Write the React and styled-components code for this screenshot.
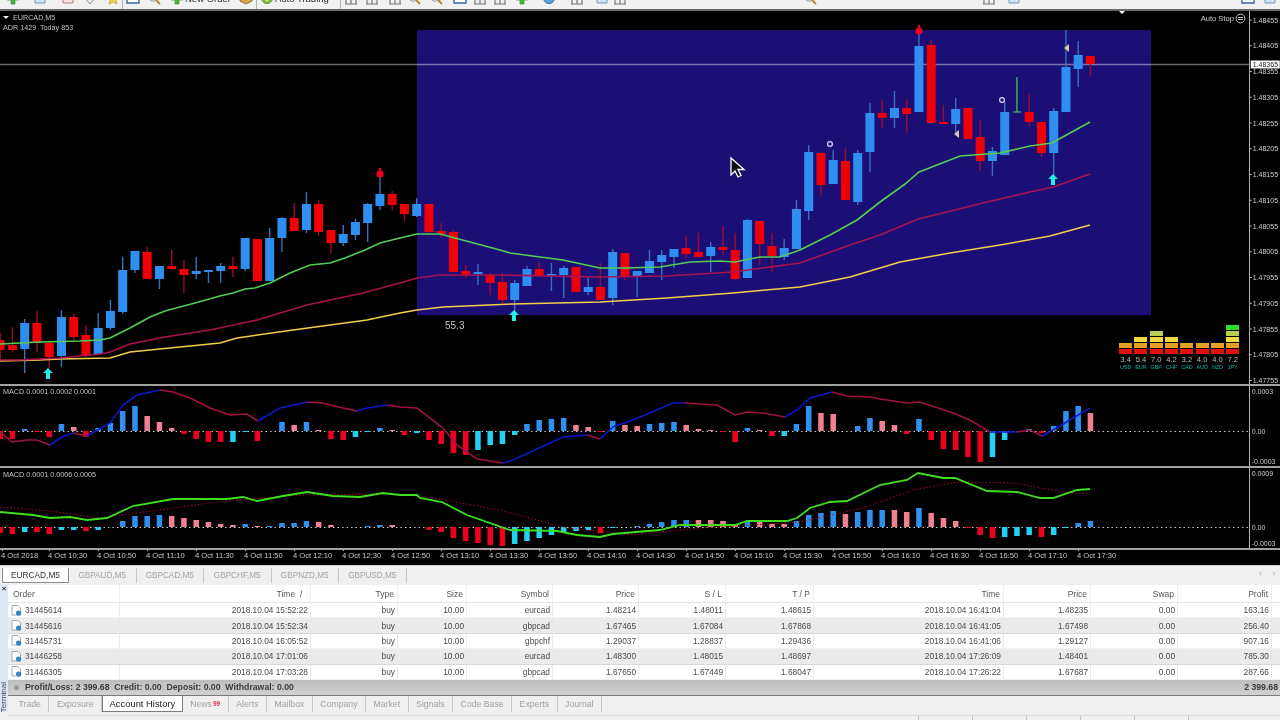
import React from 'react';
import styled, { createGlobalStyle } from 'styled-components';

const GlobalStyle = createGlobalStyle`
	html, body {
		margin: 0;
		padding: 0;
		background: #f0f0f0;
		overflow: hidden;
	}
	body, text {
		font-family: "Liberation Sans", Arial, sans-serif;
	}
`;

const COLUMNS = '112px 191px 87px 69px 86px 86px 87px 88px 190px 87px 87px 94px';

const Page = styled.div`
	width: 1280px;
	height: 720px;
	display: flex;
	flex-direction: column;
	overflow: hidden;
	filter: blur(0.4px);
	background: #f0f0f0;
`;

/* ---- toolbar, only its lower edge is on screen ---- */
const Toolbar = styled.div`
	height: 9px;
	box-sizing: border-box;
	padding: 0 0 4px 0;
	display: flex;
	align-items: flex-end;
	background: #f1f1f1;
	flex-shrink: 0;
`;

const ToolItem = styled.div`
	position: relative;
	display: flex;
	align-items: flex-end;
	gap: 1px;
	flex-shrink: 0;
	margin-left: ${p => p.$gap}px;
	${p => p.$sep && `
		&::before {
			content: '';
			position: absolute;
			left: -4px;
			bottom: -4px;
			width: 1px;
			height: 12px;
			background: #b5b5b5;
		}
	`}
`;

const ToolLabel = styled.span`
	font-size: 9.5px;
	line-height: 9px;
	color: #333;
	white-space: nowrap;
	margin-bottom: 2px;
`;

/* ---- chart window ---- */
const ChartWindow = styled.div`
	height: 556px;
	flex-shrink: 0;
	display: flex;
	flex-direction: column;
	background: #000;
	border-top: 2px solid #6a6a6a;
	box-sizing: border-box;
`;

const Pane = styled.div`
	display: flex;
	height: ${p => p.$height}px;
	flex-shrink: 0;
	box-sizing: border-box;
	border-bottom: 2px solid #a2a2a2;
`;

const Plot = styled.div`
	position: relative;
	width: 1249px;
	flex-shrink: 0;
	overflow: hidden;
`;

const PlotSvg = styled.svg`
	display: block;
`;

const PriceAxis = styled.svg`
	display: block;
	width: 31px;
	flex-shrink: 0;
	border-left: 1.5px solid #b0b0b0;
	box-sizing: border-box;
`;

const AxisText = styled.text`
	font-size: 7px;
	fill: ${p => p.$fill || '#cfcfcf'};
`;

const Legend = styled.div`
	position: absolute;
	left: ${p => p.$left || 3}px;
	top: ${p => p.$top}px;
	font-size: ${p => p.$size || 7.2}px;
	line-height: 10px;
	color: #c4c4c4;
	white-space: pre;
`;

const Caret = styled.span`
	display: inline-block;
	width: 0;
	height: 0;
	margin: 0 4px 1px 0;
	border-left: 3px solid transparent;
	border-right: 3px solid transparent;
	border-top: 3px solid #eee;
`;

const AutoStop = styled.div`
	position: absolute;
	right: 3px;
	top: 2px;
	display: flex;
	align-items: center;
	gap: 1px;
	font-size: 7.6px;
	color: #c8c8c8;
`;

const Meter = styled.div`
	position: absolute;
	left: 1118px;
	top: 313px;
	display: flex;
`;

const MeterCol = styled.div`
	width: 15.3px;
	display: flex;
	flex-direction: column;
	align-items: center;
`;

const MeterStack = styled.div`
	height: 30px;
	display: flex;
	flex-direction: column-reverse;
	gap: 1px;
`;

const MeterSeg = styled.div`
	width: 13px;
	height: 5px;
	background: ${p => p.$color};
`;

const MeterValue = styled.div`
	font-size: 7.6px;
	line-height: 9px;
	margin-top: 1px;
	color: #bcbcbc;
`;

const MeterName = styled.div`
	font-size: 5.4px;
	line-height: 7px;
	color: #12b5a5;
`;

const TimeAxis = styled.div`
	height: 15px;
	flex-shrink: 0;
	display: flex;
	padding-left: 1px;
	background: #000;
`;

const TimeLabel = styled.div`
	position: relative;
	width: ${p => (p.$first ? 47 : 49)}px;
	flex-shrink: 0;
	padding-top: 1px;
	font-size: 7.6px;
	line-height: 9px;
	color: #c9c9c9;
	white-space: nowrap;
	&::before {
		content: '';
		position: absolute;
		left: 1px;
		top: -1px;
		width: 1px;
		height: 2px;
		background: #aaa;
	}
`;

/* ---- symbol tabs ---- */
const SymbolBar = styled.div`
	height: 20px;
	flex-shrink: 0;
	display: flex;
	align-items: flex-start;
	padding: 2px 0 0 2px;
	box-sizing: border-box;
	background: #f0f0f0;
	border-top: 1px solid #cfcfcf;
`;

const SymbolTab = styled.div`
	box-sizing: border-box;
	height: 15px;
	width: ${p => (p.$active ? '67px' : '67.5px')};
	display: flex;
	align-items: center;
	justify-content: center;
	font-size: ${p => (p.$active ? 8.3 : 8.2)}px;
	color: ${p => (p.$active ? '#333' : '#a3a3a3')};
	background: ${p => (p.$active ? '#fff' : 'transparent')};
	border: ${p => (p.$active ? '1px solid #8d8d8d' : '0')};
	border-top: 0;
	border-right: ${p => (p.$active ? '1px solid #8d8d8d' : '1px solid #c8c8c8')};
`;

const Scroller = styled.div`
	margin-left: auto;
	padding: 2px 5px 0 0;
	display: flex;
	gap: 11px;
	font-size: 7px;
	color: #999;
`;

/* ---- terminal ---- */
const Terminal = styled.div`
	flex: 1;
	display: flex;
	min-height: 0;
`;

const Sliver = styled.div`
	width: 8px;
	flex-shrink: 0;
	height: 127px;
	display: flex;
	flex-direction: column;
	justify-content: space-between;
	align-items: center;
	background: #dbe7f2;
	overflow: hidden;
`;

const CloseMark = styled.div`
	font-size: 8px;
	line-height: 8px;
	font-weight: bold;
	color: #333;
`;

const SliverTitle = styled.div`
	writing-mode: vertical-rl;
	transform: rotate(180deg);
	font-size: 8px;
	line-height: 8px;
	color: #445;
`;

const TerminalBody = styled.div`
	flex: 1;
	min-width: 0;
	display: flex;
	flex-direction: column;
`;

const TableHead = styled.div`
	display: grid;
	grid-template-columns: ${COLUMNS};
	height: 18px;
	background: #fff;
	border-bottom: 1px solid #e4e4e4;
	box-sizing: border-box;
`;

const HeadCell = styled.div`
	display: flex;
	align-items: center;
	justify-content: ${p => (p.$left ? 'flex-start' : 'flex-end')};
	padding: ${p => (p.$left ? '0 0 0 5px' : '0 3px 0 0')};
	font-size: 8.5px;
	color: #555;
	border-right: 1px solid #efefef;
	white-space: pre;
`;

const Row = styled.div`
	display: grid;
	grid-template-columns: ${COLUMNS};
	height: 15.4px;
	background: ${p => (p.$even ? '#ebebeb' : '#fff')};
	box-sizing: border-box;
	border-bottom: 1px solid ${p => (p.$even ? '#d8d8d8' : '#f2f2f2')};
`;

const Cell = styled.div`
	display: flex;
	align-items: center;
	justify-content: ${p => (p.$left ? 'flex-start' : 'flex-end')};
	gap: 3px;
	padding: ${p => (p.$left ? '0 0 0 3px' : '0 2px 0 0')};
	font-size: 8.3px;
	color: #4a4a4a;
	border-right: 1px solid #e9e9e9;
	white-space: nowrap;
`;

const StatusBar = styled.div`
	height: 16px;
	flex-shrink: 0;
	box-sizing: border-box;
	display: flex;
	align-items: center;
	padding: 0 2px 0 5px;
	gap: 6px;
	font-size: 8.7px;
	font-weight: bold;
	color: #3a3a3a;
	white-space: pre;
	background: linear-gradient(#bcbcbc, #d2d2d2);
	border-bottom: 1px solid #777;
`;

const StatusDot = styled.span`
	width: 5px;
	height: 5px;
	border-radius: 50%;
	background: #9d9d9d;
	margin-left: 1px;
`;

const StatusTotal = styled.span`
	margin-left: auto;
`;

const TermTabs = styled.div`
	height: 16px;
	flex-shrink: 0;
	display: flex;
	padding-left: 3px;
	background: #f0f0f0;
`;

const TermTab = styled.div`
	display: flex;
	align-items: center;
	box-sizing: border-box;
	padding: 0 ${p => (p.$active ? 6.5 : 7.5)}px;
	font-size: ${p => (p.$active ? 9.4 : 8.7)}px;
	color: ${p => (p.$active ? '#222' : '#a0a0a0')};
	white-space: nowrap;
	background: ${p => (p.$active ? '#fff' : 'transparent')};
	border-right: 1px solid ${p => (p.$active ? '#7d7d7d' : '#c4c4c4')};
	border-left: ${p => (p.$active ? '1px solid #7d7d7d' : '0')};
	border-bottom: ${p => (p.$active ? '1px solid #7d7d7d' : '0')};
`;

const Badge = styled.sub`
	font-size: 6.5px;
	font-weight: bold;
	line-height: 0;
	color: #d83050;
	margin-left: 1px;
`;

const Footer = styled.div`
	flex: 1;
	display: flex;
	padding-left: 910px;
	margin-top: 3px;
	background: #f0f0f0;
	border-top: 1px solid #dcdcdc;
`;

const FooterCell = styled.div`
	width: 53px;
	flex-shrink: 0;
	border-left: 1px solid #c4c4c4;
`;

/* ---- chart data, page pixel coordinates ---- */
const X = i => 0.2 + 12.25 * i;
const pts = arr => arr.map(p => p.join(',')).join(' ');

// [body top, body bottom, high, low, colour]
const CANDLES = [
	[340, 350, 333, 360, 'r'], [345, 350, 327, 352, 'r'], [323, 349, 319, 373, 'b'], [323, 343, 311, 352, 'r'],
	[343, 357, 342, 368, 'r'], [317, 356, 310, 367, 'b'], [317, 337, 314, 340, 'r'], [335, 356, 325, 357, 'r'],
	[328, 354, 313, 355, 'b'], [311, 328, 300, 330, 'b'], [270, 312, 257, 314, 'b'], [251, 270, 251, 273, 'b'],
	[252, 279, 247, 279, 'r'], [266, 279, 266, 289, 'b'], [266, 269, 250, 270, 'r'], [269, 275, 260, 293, 'r'],
	[271, 274, 257, 279, 'b'], [270, 271, 270, 283, 'b'], [266, 271, 263, 283, 'b'], [266, 269, 257, 277, 'r'],
	[238, 269, 238, 271, 'b'], [239, 281, 239, 281, 'r'], [238, 281, 228, 281, 'b'], [218, 238, 217, 252, 'b'],
	[218, 231, 203, 231, 'r'], [204, 230, 192, 233, 'b'], [204, 232, 200, 236, 'r'], [230, 243, 230, 253, 'r'],
	[234, 243, 225, 246, 'b'], [222, 235, 219, 240, 'b'], [204, 223, 203, 242, 'b'], [194, 206, 177, 210, 'b'],
	[194, 205, 191, 210, 'r'], [204, 214, 204, 221, 'r'], [204, 216, 198, 217, 'b'], [204, 232, 204, 233, 'r'],
	[231, 234, 223, 238, 'r'], [232, 272, 230, 272, 'r'], [271, 275, 265, 278, 'r'], [272, 273, 264, 285, 'b'],
	[275, 283, 273, 295, 'r'], [282, 300, 273, 303, 'r'], [283, 300, 280, 313, 'b'], [269, 286, 266, 286, 'b'],
	[269, 275, 262, 275, 'r'], [274, 275, 263, 291, 'b'], [268, 275, 266, 298, 'b'], [267, 292, 267, 292, 'r'],
	[287, 292, 277, 295, 'b'], [287, 300, 263, 300, 'r'], [252, 298, 249, 305, 'b'], [253, 277, 253, 280, 'r'],
	[271, 277, 271, 297, 'b'], [261, 273, 250, 273, 'b'], [255, 262, 250, 280, 'b'], [249, 257, 249, 268, 'b'],
	[248, 254, 236, 258, 'r'], [252, 257, 233, 257, 'r'], [247, 256, 242, 272, 'b'], [247, 250, 226, 255, 'r'],
	[250, 279, 233, 280, 'r'], [220, 278, 219, 278, 'b'], [221, 244, 221, 265, 'r'], [246, 256, 233, 272, 'r'],
	[248, 257, 239, 260, 'b'], [209, 249, 200, 249, 'b'], [152, 211, 145, 220, 'b'], [153, 185, 153, 195, 'r'],
	[160, 184, 150, 184, 'b'], [161, 200, 148, 200, 'r'], [153, 202, 150, 205, 'b'], [113, 152, 103, 172, 'b'],
	[113, 118, 100, 128, 'r'], [108, 118, 91, 128, 'b'], [108, 114, 100, 133, 'r'], [46, 112, 30, 112, 'b'],
	[45, 123, 40, 123, 'r'], [122, 124, 105, 124, 'r'], [109, 124, 98, 133, 'b'], [108, 139, 108, 139, 'r'],
	[137, 161, 120, 171, 'r'], [151, 161, 147, 176, 'b'], [112, 155, 102, 155, 'b'], [111, 112, 77, 112, 'g'],
	[112, 122, 94, 126, 'r'], [122, 153, 122, 157, 'r'], [111, 153, 108, 175, 'b'], [67, 112, 30, 112, 'b'],
	[55, 69, 41, 87, 'b'], [56, 64, 56, 76, 'r']
];

const BODY = { b: '#2e8ff0', r: '#f00006', g: '#48b060' };
const WICK = { b: '#3a6fc0', r: '#9c0c28', g: '#48b060' };

const MA_GREEN = [[0, 344], [40, 342], [80, 341], [100, 340], [110, 338], [130, 328], [150, 317], [165, 311], [195, 303], [220, 296], [233, 293], [245, 289], [255, 288], [270, 283], [290, 273], [310, 265], [330, 263], [345, 258], [365, 250], [380, 243], [400, 238], [417, 234], [440, 234], [470, 242], [500, 250], [510, 253], [540, 257], [563, 260], [600, 268], [625, 268], [660, 267], [690, 262], [720, 261], [735, 262], [760, 257], [780, 257], [800, 250], [830, 235], [857, 220], [880, 202], [905, 184], [919, 172], [960, 156], [1000, 153], [1030, 146], [1052, 143], [1070, 133], [1090, 122]];
const MA_RED = [[0, 360], [20, 360], [60, 358], [100, 354], [110, 352], [130, 344], [165, 337], [210, 330], [257, 320], [307, 305], [363, 293], [400, 283], [417, 278], [440, 275], [500, 275], [600, 277], [667, 276], [733, 272], [800, 263], [850, 245], [880, 235], [918, 219], [947, 212], [987, 202], [1030, 192], [1053, 187], [1090, 174]];
const MA_YELLOW = [[0, 361], [40, 360], [60, 359], [110, 358], [130, 352], [220, 343], [237, 338], [293, 330], [367, 320], [400, 313], [417, 310], [443, 307], [513, 304], [600, 302], [667, 298], [733, 293], [800, 287], [850, 277], [900, 262], [950, 253], [1000, 245], [1050, 236], [1090, 225]];

const HIST_COLOR = { r: '#f00020', p: '#f08092', b: '#2f90f0', c: '#22d0f2' };

const HIST_A = [
	['r', -8], ['r', -8], ['b', 2], ['r', -1], ['r', -6], ['b', 7], ['p', 4], ['r', -6], ['b', 3], ['b', 8], ['b', 20], ['b', 25],
	['p', 15], ['p', 9], ['p', 3], ['r', -3], ['r', -8], ['r', -11], ['r', -11], ['c', -11], ['c', -1], ['r', -10], ['r', 0], ['b', 9],
	['p', 6], ['b', 9], ['p', 1], ['r', -8], ['r', -9], ['c', -6], ['c', -1], ['b', 3], ['p', 1], ['r', -4], ['c', -2], ['r', -9],
	['r', -13], ['r', -22], ['r', -24], ['c', -19], ['c', -14], ['c', -13], ['c', -4], ['b', 7], ['b', 11], ['b', 12], ['b', 13], ['p', 6],
	['p', 4], ['r', -1], ['b', 10], ['p', 6], ['p', 5], ['b', 7], ['b', 8], ['b', 9], ['p', 6], ['p', 2], ['p', 1], ['r', -1],
	['r', -11], ['b', 3], ['p', 1], ['r', -5], ['c', -5], ['b', 7], ['b', 25], ['p', 18], ['p', 17], ['r', 0], ['b', 5], ['b', 13],
	['p', 10], ['p', 6], ['r', -3], ['b', 12], ['r', -9], ['r', -18], ['r', -19], ['r', -26], ['r', -31], ['c', -26], ['c', -9], ['c', 0],
	['b', 2], ['r', -2], ['b', 5], ['b', 20], ['b', 25], ['p', 18]
];

const HIST_B = [
	['r', -6], ['r', -7], ['c', -5], ['r', -5], ['r', -7], ['c', -3], ['c', -3], ['r', -4], ['c', -3], ['r', 0], ['b', 6], ['b', 11],
	['b', 11], ['b', 12], ['p', 11], ['p', 9], ['p', 7], ['p', 5], ['p', 3], ['p', 2], ['b', 3], ['p', 1], ['b', 1], ['b', 4],
	['b', 4], ['b', 6], ['p', 5], ['p', 2], ['r', 0], ['r', 0], ['b', 1], ['b', 2], ['p', 2], ['r', 0], ['r', 0], ['r', -3],
	['r', -5], ['r', -11], ['r', -14], ['r', -16], ['r', -18], ['r', -19], ['c', -17], ['c', -14], ['c', -11], ['c', -8], ['c', -5], ['c', -4],
	['c', -3], ['r', -6], ['c', -1], ['r', 0], ['b', 1], ['b', 3], ['b', 5], ['b', 7], ['b', 7], ['p', 7], ['p', 7], ['p', 6],
	['p', 2], ['b', 5], ['p', 5], ['p', 3], ['p', 3], ['b', 6], ['b', 12], ['b', 14], ['b', 16], ['p', 13], ['b', 15], ['b', 17],
	['b', 17], ['p', 17], ['p', 15], ['b', 19], ['p', 14], ['p', 9], ['p', 6], ['r', -1], ['r', -8], ['r', -11], ['c', -10], ['c', -9],
	['c', -8], ['r', -10], ['c', -8], ['c', -1], ['b', 4], ['b', 6]
];

// macd line of the first pane, crimson and blue stretches in turn
const MACD_LINES = [
	['#a01048', [[0, 432], [12, 442], [27, 440], [37, 440], [50, 445]]],
	['#0d18c8', [[50, 445], [62, 437], [73, 433]]],
	['#a01048', [[73, 433], [87, 436]]],
	['#0d18c8', [[87, 436], [110, 423], [123, 405], [137, 395], [160, 390]]],
	['#a01048', [[160, 390], [173, 392], [190, 398], [210, 408], [230, 415], [247, 414], [258, 421]]],
	['#0d18c8', [[258, 421], [280, 408], [307, 402]]],
	['#a01048', [[307, 402], [322, 403], [343, 408], [357, 411]]],
	['#0d18c8', [[357, 411], [367, 408], [387, 405]]],
	['#a01048', [[387, 405], [400, 407], [417, 408], [443, 428], [457, 445], [477, 459], [503, 463]]],
	['#0d18c8', [[503, 463], [513, 460], [563, 437], [587, 435]]],
	['#a01048', [[587, 435], [600, 439]]],
	['#0d18c8', [[600, 439], [613, 427], [633, 420], [673, 403], [685, 403]]],
	['#a01048', [[685, 403], [717, 405], [735, 415], [747, 412], [763, 413], [785, 417]]],
	['#0d18c8', [[785, 417], [797, 410], [810, 398], [832, 392]]],
	['#a01048', [[832, 392], [847, 396], [870, 397], [880, 399], [907, 403], [920, 402], [953, 413], [970, 420], [990, 432]]],
	['#0d18c8', [[990, 432], [1017, 432]]],
	['#a01048', [[1017, 432], [1030, 430], [1042, 436]]],
	['#0d18c8', [[1042, 436], [1053, 430], [1090, 408]]]
];

const MACD_GREEN = [[0, 512], [33, 515], [50, 518], [70, 517], [87, 520], [107, 518], [133, 506], [173, 499], [227, 499], [243, 497], [257, 501], [283, 496], [307, 492], [333, 496], [360, 497], [383, 493], [400, 495], [417, 495], [420, 498], [442, 502], [467, 515], [510, 530], [557, 531], [577, 535], [600, 537], [613, 534], [660, 530], [680, 525], [735, 525], [747, 521], [787, 521], [797, 518], [810, 508], [830, 502], [847, 501], [880, 485], [907, 480], [918, 473], [943, 478], [955, 478], [987, 491], [1017, 492], [1040, 498], [1053, 498], [1077, 490], [1090, 489]];
const MACD_SIGNAL = [[0, 507], [50, 511], [100, 518], [217, 502], [300, 495], [400, 494], [433, 498], [500, 510], [567, 528], [633, 535], [700, 528], [800, 522], [863, 508], [913, 490], [957, 482], [1013, 483], [1063, 492], [1090, 494]];

const PRICES = ['1.48455', '1.48405', '1.48355', '1.48305', '1.48255', '1.48205', '1.48155', '1.48105', '1.48055', '1.48005', '1.47955', '1.47905', '1.47855', '1.47805', '1.47755'];

const TIMES = ['4 Oct 2018', '4 Oct 10:30', '4 Oct 10:50', '4 Oct 11:10', '4 Oct 11:30', '4 Oct 11:50', '4 Oct 12:10', '4 Oct 12:30', '4 Oct 12:50', '4 Oct 13:10', '4 Oct 13:30', '4 Oct 13:50', '4 Oct 14:10', '4 Oct 14:30', '4 Oct 14:50', '4 Oct 15:10', '4 Oct 15:30', '4 Oct 15:50', '4 Oct 16:10', '4 Oct 16:30', '4 Oct 16:50', '4 Oct 17:10', '4 Oct 17:30'];

const STRENGTH = [
	{ name: 'USD', value: '3.4', level: 2 },
	{ name: 'EUR', value: '5.4', level: 3 },
	{ name: 'GBP', value: '7.0', level: 4 },
	{ name: 'CHF', value: '4.2', level: 3 },
	{ name: 'CAD', value: '3.2', level: 2 },
	{ name: 'AUD', value: '4.0', level: 2 },
	{ name: 'NZD', value: '4.0', level: 2 },
	{ name: 'JPY', value: '7.2', level: 5 }
];
const SEG_COLORS = ['#e01010', '#e8a024', '#f0d840', '#b8d050', '#2ee02e'];

const SYMBOLS = ['EURCAD,M5', 'GBPAUD,M5', 'GBPCAD,M5', 'GBPCHF,M5', 'GBPNZD,M5', 'GBPUSD,M5'];

const HEAD = ['Order', 'Time  /  ', 'Type', 'Size', 'Symbol', 'Price', 'S / L', 'T / P', 'Time', 'Price', 'Swap', 'Profit'];

const ROWS = [
	['31445614', '2018.10.04 15:52:22', 'buy', '10.00', 'eurcad', '1.48214', '1.48011', '1.48615', '2018.10.04 16:41:04', '1.48235', '0.00', '163.16'],
	['31445616', '2018.10.04 15:52:34', 'buy', '10.00', 'gbpcad', '1.67465', '1.67084', '1.67868', '2018.10.04 16:41:05', '1.67498', '0.00', '256.40'],
	['31445731', '2018.10.04 16:05:52', 'buy', '10.00', 'gbpchf', '1.29037', '1.28837', '1.29436', '2018.10.04 16:41:06', '1.29127', '0.00', '907.16'],
	['31446258', '2018.10.04 17:01:06', 'buy', '10.00', 'eurcad', '1.48300', '1.48015', '1.48697', '2018.10.04 17:26:09', '1.48401', '0.00', '785.30'],
	['31446305', '2018.10.04 17:03:28', 'buy', '10.00', 'gbpcad', '1.67650', '1.67449', '1.68047', '2018.10.04 17:26:22', '1.67687', '0.00', '287.66']
];

const TERM_TABS = ['Trade', 'Exposure', 'Account History', 'News', 'Alerts', 'Mailbox', 'Company', 'Market', 'Signals', 'Code Base', 'Experts', 'Journal'];

const TOOLS = [
	{ k: 'plus', gap: 6 },
	{ k: 'doc', gap: 13 },
	{ k: 'red', gap: 14 },
	{ k: 'gem', gap: 8 },
	{ k: 'star', gap: 9 },
	{ k: 'frame', gap: 6, sep: true },
	{ k: 'lens', gap: 7 },
	{ k: 'plus', gap: 9, label: 'New Order' },
	{ k: 'box', gap: 8 },
	{ k: 'auto', gap: 7, sep: true, label: 'Auto Trading' },
	{ k: 'bars', gap: 15, sep: true },
	{ k: 'bars', gap: 7 },
	{ k: 'bars', gap: 9 },
	{ k: 'lens', gap: 5 },
	{ k: 'lens', gap: 8 },
	{ k: 'frame', gap: 10 },
	{ k: 'bars', gap: 6 },
	{ k: 'bars', gap: 6 },
	{ k: 'plus', gap: 8 },
	{ k: 'disc', gap: 13 },
	{ k: 'bars', gap: 14 },
	{ k: 'doc', gap: 11 },
	{ k: 'bars', gap: 4 },
	{ k: 'lens', gap: 176 },
	{ k: 'bars', gap: 165 },
	{ k: 'doc', gap: 11 },
	{ k: 'frame', gap: 220 },
	{ k: 'doc', gap: 8 }
];

const ToolGlyph = ({ k }) => {
	const shapes = {
		plus: <path d="M5 1h4v4h4v4H9v4H5V9H1V5h4z" fill="#3fb93a" stroke="#2b8a2a" strokeWidth=".6" />,
		doc: <path d="M2 1h10v11H2z" fill="#cfe0f2" stroke="#7f97b4" />,
		red: <path d="M2 2h10v10H2z" fill="#f5e6e6" stroke="#b87878" />,
		gem: <path d="M1 6l6 7 6-7-3-4H4z" fill="#e8e8e0" stroke="#9a9a90" />,
		star: <path d="M7 1l2 4 4 1-3 3 1 4-4-2-4 2 1-4-3-3 4-1z" fill="#f2d34a" stroke="#b99a24" strokeWidth=".7" />,
		frame: <path d="M1 2h12v10H1z" fill="#fff" stroke="#3a62a8" strokeWidth="1.4" />,
		lens: <g><circle cx="6" cy="6" r="4.2" fill="#e7f0f8" stroke="#8a9aa8" /><path d="M9 9l4 4" stroke="#b58a34" strokeWidth="2" /></g>,
		box: <path d="M1 5l6-3 6 3v5l-6 3-6-3z" fill="#d9a54c" stroke="#96702a" />,
		auto: <g><circle cx="7" cy="7" r="5.5" fill="#8cc63f" stroke="#5d8f25" /><path d="M7 4v6" stroke="#fff" strokeWidth="1.6" /></g>,
		bars: <path d="M2 13V6M7 13V3M12 13V8M1 13h12" stroke="#777" strokeWidth="1.2" fill="none" />,
		disc: <circle cx="7" cy="7" r="5.5" fill="#5ba4dc" stroke="#2e6ea6" />
	};
	return (
		<svg width="14" height="14" viewBox="0 0 14 14">
			{shapes[k]}
		</svg>
	);
};

const OrderIcon = () => (
	<svg width="11" height="11" viewBox="0 0 11 11">
		<path d="M1 .5h6l2.5 2.5v7H1z" fill="#fff" stroke="#8c9aa6" strokeWidth=".8" />
		<circle cx="7.6" cy="8" r="2.6" fill="#2f86c5" />
	</svg>
);

const ArrowUp = ({ x, y }) => (
	<path
		d={`M${x} ${y - 6}l5 5h-3v6h-4v-6h-3z`}
		fill="#22f0e0"
	/>
);

const ArrowRed = ({ x, y }) => (
	<g fill="#f00020">
		<circle cx={x} cy={y} r="3.6" />
		<path d={`M${x - 1.2} ${y - 6}h2.4v4h-2.4z`} />
	</g>
);

const Ring = ({ x, y }) => (
	<circle cx={x} cy={y} r="2.4" fill="none" stroke="#dcd4ff" strokeWidth="1.2" />
);

const TanMark = ({ x, y }) => (
	<path d={`M${x - 3} ${y}l5 -4v8z`} fill="#d8c8a0" />
);

const MainChart = () => (
	<PlotSvg width="1249" height="373" viewBox="0 11 1249 373">
		<rect x="417" y="30" width="734" height="285" fill="#1b0f75" />
		<line x1="0" y1="64.5" x2="1249" y2="64.5" stroke="#fff" strokeOpacity=".42" strokeWidth="1.4" />
		{CANDLES.map(([top, bottom, high, low, c], i) => (
			<g key={i}>
				<line x1={X(i)} x2={X(i)} y1={high} y2={low} stroke={WICK[c]} strokeWidth="1.4" />
				{c === 'g' ? (
					<line x1={X(i) - 4} x2={X(i) + 4} y1={bottom} y2={bottom} stroke={BODY.g} strokeWidth="1.2" />
				) : (
					<rect x={X(i) - 4.5} y={top} width="9" height={Math.max(bottom - top, 2)} fill={BODY[c]} />
				)}
			</g>
		))}
		<polyline points={pts(MA_YELLOW)} fill="none" stroke="#f2cf4a" strokeWidth="1.5" />
		<polyline points={pts(MA_RED)} fill="none" stroke="#a81250" strokeWidth="1.6" />
		<polyline points={pts(MA_GREEN)} fill="none" stroke="#56cc55" strokeWidth="1.6" />
		<ArrowUp x={48} y={374} />
		<ArrowUp x={514} y={316} />
		<ArrowUp x={1053} y={180} />
		<ArrowRed x={380} y={174} />
		<ArrowRed x={919} y={31} />
		<Ring x={830} y={144} />
		<Ring x={1002} y={100} />
		<TanMark x={957} y={134} />
		<TanMark x={1067} y={48} />
		<path d="M1119 11h6l-3 3z" fill="#fff" />
		<path
			d="M731 158v17l4-4 3 6 3-1.5-3-6h6z"
			fill="#111"
			stroke="#fff"
			strokeWidth="1.3"
		/>
	</PlotSvg>
);

const MainAxis = () => (
	<PriceAxis height="373" viewBox="1250.5 11 29.5 373">
		{PRICES.map((label, i) => {
			const y = 20 + i * 25.75;
			return (
				<g key={label}>
					<line x1="1250" x2="1252" y1={y} y2={y} stroke="#bbb" />
					<AxisText x="1253" y={y + 2.5}>{label}</AxisText>
				</g>
			);
		})}
		<rect x="1251" y="60.5" width="29" height="8" fill="#fff" />
		<AxisText x="1253" y="67" $fill="#222">1.48365</AxisText>
	</PriceAxis>
);

const Histogram = ({ data, zero }) =>
	data.map(([c, v], i) =>
		v === 0 ? null : (
			<rect
				key={i}
				x={X(i) - 2.75}
				y={v > 0 ? zero - v : zero}
				width="5.5"
				height={Math.abs(v)}
				fill={HIST_COLOR[c]}
			/>
		)
	);

const ZeroLine = ({ y }) => (
	<line x1="0" x2="1249" y1={y} y2={y} stroke="#c8c8c8" strokeWidth="1" strokeDasharray="1.5 3" />
);

const SubAxis = ({ top, height, labels }) => (
	<PriceAxis height={height} viewBox={`1250.5 ${top} 29.5 ${height}`}>
		{labels.map(([label, y]) => (
			<AxisText key={label} x="1252" y={y + 2.5}>{label}</AxisText>
		))}
	</PriceAxis>
);

const App = () => (
	<>
		<GlobalStyle />
		<Page>
			<Toolbar>
				{TOOLS.map((t, i) => (
					<ToolItem key={i} $gap={t.gap} $sep={t.sep}>
						<ToolGlyph k={t.k} />
						{t.label && <ToolLabel>{t.label}</ToolLabel>}
					</ToolItem>
				))}
			</Toolbar>

			<ChartWindow>
				<Pane $height={375}>
					<Plot>
						<MainChart />
						<Legend $top={2}><Caret />EURCAD,M5</Legend>
						<Legend $top={12}>ADR 1429  Today 853</Legend>
						<Legend $left={445} $top={310} $size={10}>55.3</Legend>
						<AutoStop>
							Auto Stop
							<svg width="11" height="11" viewBox="0 0 11 11">
								<circle cx="5.5" cy="5.5" r="4.4" fill="none" stroke="#c8c8c8" />
								<path d="M3 4.5h5M3 6.5h5" stroke="#c8c8c8" />
							</svg>
						</AutoStop>
						<Meter>
							{STRENGTH.map(s => (
								<MeterCol key={s.name}>
									<MeterStack>
										{SEG_COLORS.slice(0, s.level).map(c => (
											<MeterSeg key={c} $color={c} />
										))}
									</MeterStack>
									<MeterValue>{s.value}</MeterValue>
									<MeterName>{s.name}</MeterName>
								</MeterCol>
							))}
						</Meter>
					</Plot>
					<MainAxis />
				</Pane>

				<Pane $height={82}>
					<Plot>
						<PlotSvg width="1249" height="80" viewBox="0 386 1249 80">
							<ZeroLine y={431.5} />
							<Histogram data={HIST_A} zero={431} />
							{MACD_LINES.map(([color, line], i) => (
								<polyline key={i} points={pts(line)} fill="none" stroke={color} strokeWidth="1.6" />
							))}
						</PlotSvg>
						<Legend $top={1}>MACD 0.0001 0.0002 0.0001</Legend>
					</Plot>
					<SubAxis top={386} height={80} labels={[['0.0003', 391], ['0.00', 431], ['-0.0003', 461]]} />
				</Pane>

				<Pane $height={82}>
					<Plot>
						<PlotSvg width="1249" height="80" viewBox="0 468 1249 80">
							<ZeroLine y={527.5} />
							<Histogram data={HIST_B} zero={527} />
							<polyline points={pts(MACD_SIGNAL)} fill="none" stroke="#a01020" strokeWidth="1" strokeDasharray="1.5 2" />
							<polyline points={pts(MACD_GREEN)} fill="none" stroke="#3ee01e" strokeWidth="1.8" />
						</PlotSvg>
						<Legend $top={2}>MACD 0.0001 0.0006 0.0005</Legend>
					</Plot>
					<SubAxis top={468} height={80} labels={[['0.0009', 473], ['0.00', 527], ['-0.0003', 543]]} />
				</Pane>

				<TimeAxis>
					{TIMES.map((t, i) => (
						<TimeLabel key={t} $first={i === 0}>{t}</TimeLabel>
					))}
				</TimeAxis>
			</ChartWindow>

			<SymbolBar>
				{SYMBOLS.map((s, i) => (
					<SymbolTab key={s} $active={i === 0}>{s}</SymbolTab>
				))}
				<Scroller>
					<span>‹</span>
					<span>›</span>
				</Scroller>
			</SymbolBar>

			<Terminal>
				<Sliver>
					<CloseMark>×</CloseMark>
					<SliverTitle>Terminal</SliverTitle>
				</Sliver>
				<TerminalBody>
					<TableHead>
						{HEAD.map((h, i) => (
							<HeadCell key={i} $left={i === 0}>{h}</HeadCell>
						))}
					</TableHead>
					{ROWS.map((row, r) => (
						<Row key={row[0]} $even={r % 2 === 1}>
							{row.map((v, i) =>
								i === 0 ? (
									<Cell key={i} $left>
										<OrderIcon />
										{v}
									</Cell>
								) : (
									<Cell key={i}>{v}</Cell>
								)
							)}
						</Row>
					))}
					<StatusBar>
						<StatusDot />
						Profit/Loss: 2 399.68  Credit: 0.00  Deposit: 0.00  Withdrawal: 0.00
						<StatusTotal>2 399.68</StatusTotal>
					</StatusBar>
					<TermTabs>
						{TERM_TABS.map(t => (
							<TermTab key={t} $active={t === 'Account History'}>
								{t}
								{t === 'News' && <Badge>99</Badge>}
							</TermTab>
						))}
					</TermTabs>
					<Footer>
						{[0, 1, 2, 3, 4, 5].map(n => (
							<FooterCell key={n} />
						))}
					</Footer>
				</TerminalBody>
			</Terminal>
		</Page>
	</>
);

export default App;
